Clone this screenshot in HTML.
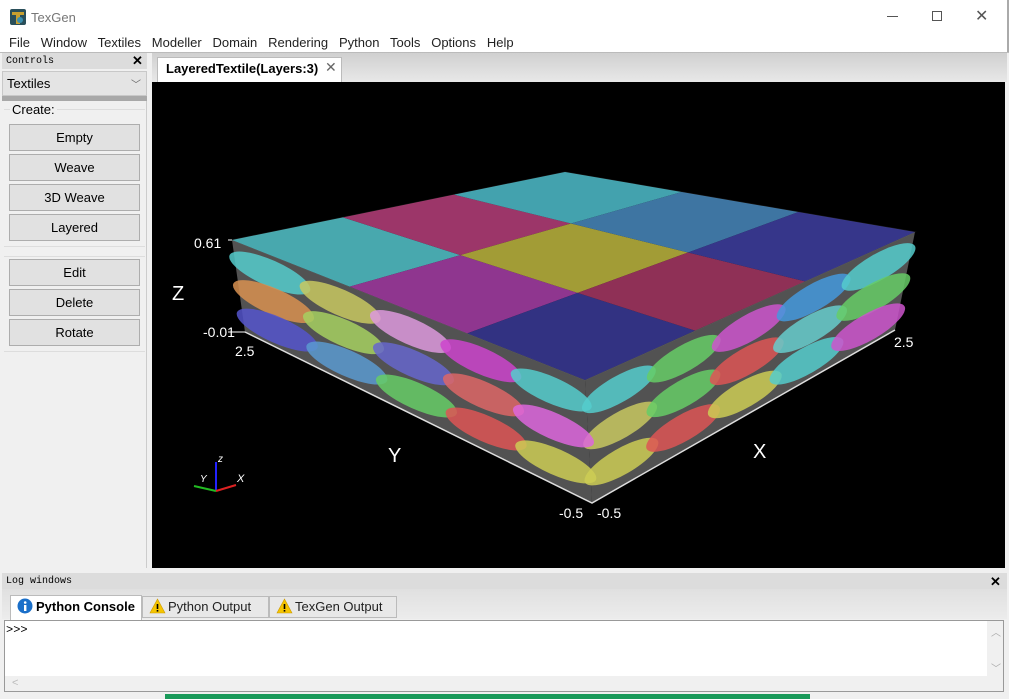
<!DOCTYPE html>
<html><head><meta charset="utf-8"><style>
*{margin:0;padding:0;box-sizing:border-box}
body{width:1009px;height:699px;background:#f0f0f0;font-family:"Liberation Sans",sans-serif;font-size:13px;color:#000;position:relative;overflow:hidden}
.a{position:absolute}
.btn{position:absolute;left:9px;width:131px;height:27px;background:#e1e1e1;border:1px solid #adadad;text-align:center;line-height:25px;font-size:13px}
.mono{font-family:"Liberation Mono",monospace;font-size:10px}
</style></head><body>
<div class="a" style="left:0;top:0;width:1009px;height:53px;background:#fff;border-right:2px solid #aaa"></div>
<svg class="a" style="left:10px;top:9px" width="16" height="16"><rect width="16" height="16" rx="2" fill="#2a4f5a"/><path d="M2 3h12v3H10v9H6V6H2z" fill="#c8a030"/><circle cx="10" cy="11" r="3" fill="#3a8fb0"/></svg>
<div class="a" style="left:31px;top:10px;color:#777;font-size:13px">TexGen</div>
<div class="a" style="left:887px;top:16px;width:11px;height:1px;background:#555"></div>
<div class="a" style="left:932px;top:11px;width:10px;height:10px;border:1px solid #555"></div>
<div class="a" style="left:975px;top:6px;font-size:16px;color:#555">✕</div>
<div class="a" style="left:9px;top:35px;color:#222;word-spacing:0">File&nbsp;&nbsp; Window&nbsp;&nbsp; Textiles&nbsp;&nbsp; Modeller&nbsp;&nbsp; Domain&nbsp;&nbsp; Rendering&nbsp;&nbsp; Python&nbsp;&nbsp; Tools&nbsp;&nbsp; Options&nbsp;&nbsp; Help</div>
<div class="a" style="left:0;top:52px;width:1009px;height:1px;background:#bbb"></div>
<!-- left dock -->
<div class="a" style="left:2px;top:53px;width:145px;height:16px;background:#dcdcdc"></div>
<div class="a mono" style="left:6px;top:56px">Controls</div>
<div class="a" style="left:132px;top:53px;font-size:13px;font-weight:bold">✕</div>
<div class="a" style="left:2px;top:71px;width:145px;height:25px;background:#e4e4e4;border:1px solid #c8c8c8"></div>
<div class="a" style="left:7px;top:76px">Textiles</div>
<div class="a" style="left:131px;top:76px;font-size:10px;color:#666">﹀</div>
<div class="a" style="left:2px;top:96px;width:145px;height:5px;background:#a8a8a8"></div>
<div class="a" style="left:2px;top:101px;width:145px;height:467px;background:#f0f0f0;border-right:1px solid #ccc"></div>
<div class="a" style="left:4px;top:109px;width:141px;height:1px;background:#ddd"></div>
<div class="a" style="left:10px;top:102px;background:#f0f0f0;padding:0 2px">Create:</div>
<div class="btn" style="top:124px">Empty</div>
<div class="btn" style="top:154px">Weave</div>
<div class="btn" style="top:184px">3D Weave</div>
<div class="btn" style="top:214px">Layered</div>
<div class="a" style="left:4px;top:246px;width:141px;height:1px;background:#ddd"></div>
<div class="a" style="left:4px;top:256px;width:141px;height:1px;background:#ddd"></div>
<div class="btn" style="top:259px">Edit</div>
<div class="btn" style="top:289px">Delete</div>
<div class="btn" style="top:319px">Rotate</div>
<div class="a" style="left:4px;top:351px;width:141px;height:1px;background:#ddd"></div>
<!-- tab area -->
<div class="a" style="left:152px;top:53px;width:855px;height:29px;background:linear-gradient(#d0d0d0,#e8e8e8)"></div>
<div class="a" style="left:157px;top:57px;width:185px;height:26px;background:#fff;border:1px solid #bbb;border-bottom:none"></div>
<div class="a" style="left:166px;top:61px;font-weight:bold">LayeredTextile(Layers:3)</div>
<div class="a" style="left:325px;top:59px;color:#666;font-size:14px">✕</div>
<div class="a" style="left:152px;top:82px;width:853px;height:486px;background:#000"></div>
<svg class="a" style="left:0;top:0" width="1009" height="699" id="sc">
<g font-family="Liberation Sans,sans-serif" fill="#fff">
<text x="194" y="248" font-size="14">0.61</text>
<text x="172" y="300" font-size="20">Z</text>
<text x="203" y="337" font-size="14">-0.01</text>
<text x="235" y="356" font-size="14">2.5</text>
<text x="388" y="462" font-size="20">Y</text>
<text x="753" y="458" font-size="20">X</text>
<text x="894" y="347" font-size="14">2.5</text>
<text x="559" y="518" font-size="14">-0.5</text>
<text x="597" y="518" font-size="14">-0.5</text>
<text x="218" y="462" font-size="10" font-style="italic">z</text>
<text x="200" y="482" font-size="10" font-style="italic">Y</text>
<text x="237" y="482" font-size="11" font-style="italic">X</text>
</g>
<g id="yarn"></g>
<line x1="216" y1="462" x2="216" y2="491" stroke="#22f" stroke-width="2"/>
<line x1="216" y1="491" x2="194" y2="486" stroke="#2b2" stroke-width="2"/>
<line x1="216" y1="491" x2="236" y2="485" stroke="#d22" stroke-width="2"/>
</svg>
<!-- log -->
<div class="a" style="left:0;top:568px;width:1009px;height:4px;background:#f0f0f0"></div>
<div class="a" style="left:2px;top:573px;width:1005px;height:16px;background:#dcdcdc"></div>
<div class="a mono" style="left:6px;top:576px">Log windows</div>
<div class="a" style="left:990px;top:574px;font-weight:bold">✕</div>
<div class="a" style="left:2px;top:589px;width:1005px;height:30px;background:linear-gradient(#e0e0e0,#ececec)"></div>
<div class="a" style="left:10px;top:595px;width:132px;height:25px;background:#fff;border:1px solid #bbb;border-bottom:none"></div>
<div class="a" style="left:142px;top:596px;width:127px;height:22px;background:#e8e8e8;border:1px solid #bbb"></div>
<div class="a" style="left:269px;top:596px;width:128px;height:22px;background:#e8e8e8;border:1px solid #bbb"></div>
<svg class="a" style="left:17px;top:598px" width="16" height="16"><circle cx="8" cy="8" r="7.5" fill="#1a6fc9"/><rect x="7" y="7" width="2.4" height="6" fill="#fff"/><circle cx="8.2" cy="4.5" r="1.3" fill="#fff"/></svg>
<div class="a" style="left:36px;top:599px;font-weight:bold">Python Console</div>
<svg class="a" style="left:149px;top:598px" width="17" height="16"><path d="M8.5 1L16 15H1z" fill="#f5c400" stroke="#c90" stroke-width=".6"/><rect x="7.7" y="6" width="1.6" height="5" fill="#000"/><rect x="7.7" y="12" width="1.6" height="1.6" fill="#000"/></svg>
<div class="a" style="left:168px;top:599px;color:#222">Python Output</div>
<svg class="a" style="left:276px;top:598px" width="17" height="16"><path d="M8.5 1L16 15H1z" fill="#f5c400" stroke="#c90" stroke-width=".6"/><rect x="7.7" y="6" width="1.6" height="5" fill="#000"/><rect x="7.7" y="12" width="1.6" height="1.6" fill="#000"/></svg>
<div class="a" style="left:295px;top:599px;color:#222">TexGen Output</div>
<div class="a" style="left:4px;top:620px;width:1000px;height:72px;background:#fff;border:1px solid #999"></div>
<div class="a" style="left:6px;top:623px;font-family:'Liberation Mono',monospace;font-size:12px">&gt;&gt;&gt;</div>
<div class="a" style="left:987px;top:621px;width:16px;height:70px;background:#f0f0f0"></div>
<div class="a" style="left:991px;top:624px;font-size:10px;color:#aaa">︿</div>
<div class="a" style="left:991px;top:660px;font-size:10px;color:#aaa">﹀</div>
<div class="a" style="left:5px;top:676px;width:982px;height:15px;background:#f0f0f0"></div>
<div class="a" style="left:12px;top:677px;font-size:11px;color:#bbb">&lt;</div>
<div class="a" style="left:165px;top:694px;width:645px;height:5px;background:#1a9a5a"></div>
<script>
(function(){
var g=document.getElementById('yarn'),NS='http://www.w3.org/2000/svg';
function el(t,a){var e=document.createElementNS(NS,t);for(var k in a)e.setAttribute(k,a[k]);g.appendChild(e);return e}
var A=[232,240],B=[565,172],C=[915,232],D=[585,380];
var Ab=[245,332],Cb=[895,330],Db=[592,503];
function lerp(p,q,t){return[p[0]+(q[0]-p[0])*t,p[1]+(q[1]-p[1])*t]}
el('polygon',{points:[A,D,Db,Ab].join(' '),fill:'#666',opacity:.8});
el('polygon',{points:[D,C,Cb,Db].join(' '),fill:'#666',opacity:.8});
var Lc=[['#5cc','#c8c860','#d9d','#c4c','#5cc'],['#d89050','#a6d060','#66c','#d66','#d6d'],['#55c','#5a9ad0','#6c6','#d55','#cc5']];
var Rc=[['#5cc','#6c6','#c5c','#49d','#5cc'],['#c8c860','#6c6','#d55','#6cc','#6c6'],['#cc5','#d55','#cc5','#5cc','#c5c']];
for(var k=0;k<3;k++){for(var i=0;i<5;i++){
 var tz=0.2+k*0.3;var t=(i+0.5)/5;
 var top=lerp(A,D,t),bot=lerp(Ab,Db,t),p=lerp(top,bot,tz);
 el('ellipse',{cx:p[0],cy:p[1],rx:44,ry:13,fill:Lc[k][i],opacity:.85,transform:'rotate(24 '+p[0]+' '+p[1]+')'});
 var top2=lerp(D,C,t),bot2=lerp(Db,Cb,t),q=lerp(top2,bot2,tz);
 el('ellipse',{cx:q[0],cy:q[1],rx:42,ry:13,fill:Rc[k][i],opacity:.85,transform:'rotate(-30 '+q[0]+' '+q[1]+')'});
}}
function P(u,v){var a=lerp(A,B,u),b=lerp(D,C,u);return lerp(a,b,v)}
var T=[['#46c0c8','#b03070','#40b8c8'],['#a030a0','#b8b030','#3a80b8'],['#2a2a90','#a02858','#30309a']];
for(var v=0;v<3;v++)for(var u=0;u<3;u++){
 var p1=P(u/3,v/3),p2=P((u+1)/3,v/3),p3=P((u+1)/3,(v+1)/3),p4=P(u/3,(v+1)/3);
 el('polygon',{points:[p1,p2,p3,p4].join(' '),fill:T[v][u],opacity:.9});
}
el('polygon',{points:[A,B,C,D].join(' '),fill:'#888',opacity:.12,stroke:'#aaa','stroke-width':1});
el('polyline',{points:[Ab,Db,Cb].join(' '),fill:'none',stroke:'#ddd','stroke-width':1.5});
el('line',{x1:228,y1:240,x2:232,y2:240,stroke:'#fff'});el('line',{x1:228,y1:332,x2:245,y2:332,stroke:'#fff'});
})();
</script>
</body></html>
